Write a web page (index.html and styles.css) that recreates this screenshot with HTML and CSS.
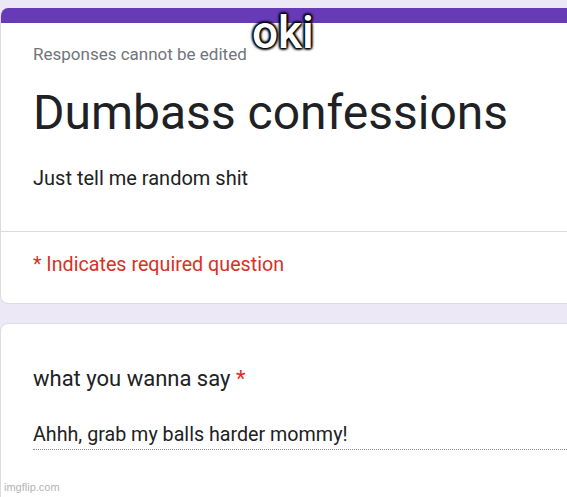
FILE: index.html
```html
<!DOCTYPE html>
<html>
<head>
<meta charset="utf-8">
<link rel="stylesheet" href="styles.css">
</head>
<body>
<div class="page">
  <div class="card header-card">
    <div class="bar"></div>
    <div class="head-body">
      <div class="note">Responses cannot be edited</div>
      <h1 class="title">Dumbass confessions</h1>
      <div class="desc">Just tell me random shit</div>
    </div>
    <div class="sep"></div>
    <div class="required">* Indicates required question</div>
  </div>
  <div class="card question-card">
    <div class="question">what you wanna say <span class="star">*</span></div>
    <div class="answer">Ahhh, grab my balls harder mommy!</div>
  </div>
</div>
<div class="caption">oki</div>
<div class="watermark">imgflip.com</div>
</body>
</html>
```
FILE: styles.css
```css
html, body {
  margin: 0;
  padding: 0;
  height: 100%;
  overflow: hidden;
}
body {
  background: #ede8f6;
  font-family: Roboto, "Liberation Sans", sans-serif;
  color: #202124;
  position: relative;
}
.page {
  display: flex;
  flex-direction: column;
  gap: 19px;
  padding-top: 8px;
  width: 600px;
}
.card {
  background: #fff;
  border: 1px solid #dadce0;
  border-radius: 8px;
  overflow: hidden;
}
.header-card {
  border-top: none;
}
.bar {
  height: 15px;
  background: #673ab7;
}
.head-body {
  padding: 19px 32px 0 32px;
}
.note {
  font-size: 17px;
  line-height: 24px;
  color: #70757a;
}
.title {
  margin: 19px 0 0 0;
  font-size: 48px;
  line-height: 56px;
  font-weight: 400;
}
.desc {
  margin-top: 23px;
  font-size: 20px;
  line-height: 28px;
}
.sep {
  margin-top: 39px;
  height: 1px;
  background: #dadce0;
}
.required {
  padding: 19px 32px 24px 32px;
  font-size: 19.7px;
  line-height: 28px;
  color: #d93025;
}
.question-card {
  padding: 39px 0 60px 32px;
  border-bottom-left-radius: 0;
}
.question {
  font-size: 22px;
  line-height: 32px;
}
.star {
  color: #d93025;
}
.answer {
  margin-top: 26px;
  font-size: 19.7px;
  line-height: 28px;
  border-bottom: 1px dotted #8a8d91;
}
.caption {
  position: absolute;
  left: 252px;
  top: 7px;
  font-size: 46px;
  line-height: 50px;
  font-weight: 500;
  color: #fff;
  text-shadow: 0 0 2px #000, 0 0 2px #000, 0 0 3px #000, 1px 1px 3px #000, -1px -1px 3px #000, 1px -1px 3px #000, -1px 1px 3px #000;
}
.watermark {
  position: absolute;
  left: 4px;
  bottom: 4px;
  font-family: "Liberation Sans", sans-serif;
  font-size: 11px;
  color: #b4b4b4;
}
```
